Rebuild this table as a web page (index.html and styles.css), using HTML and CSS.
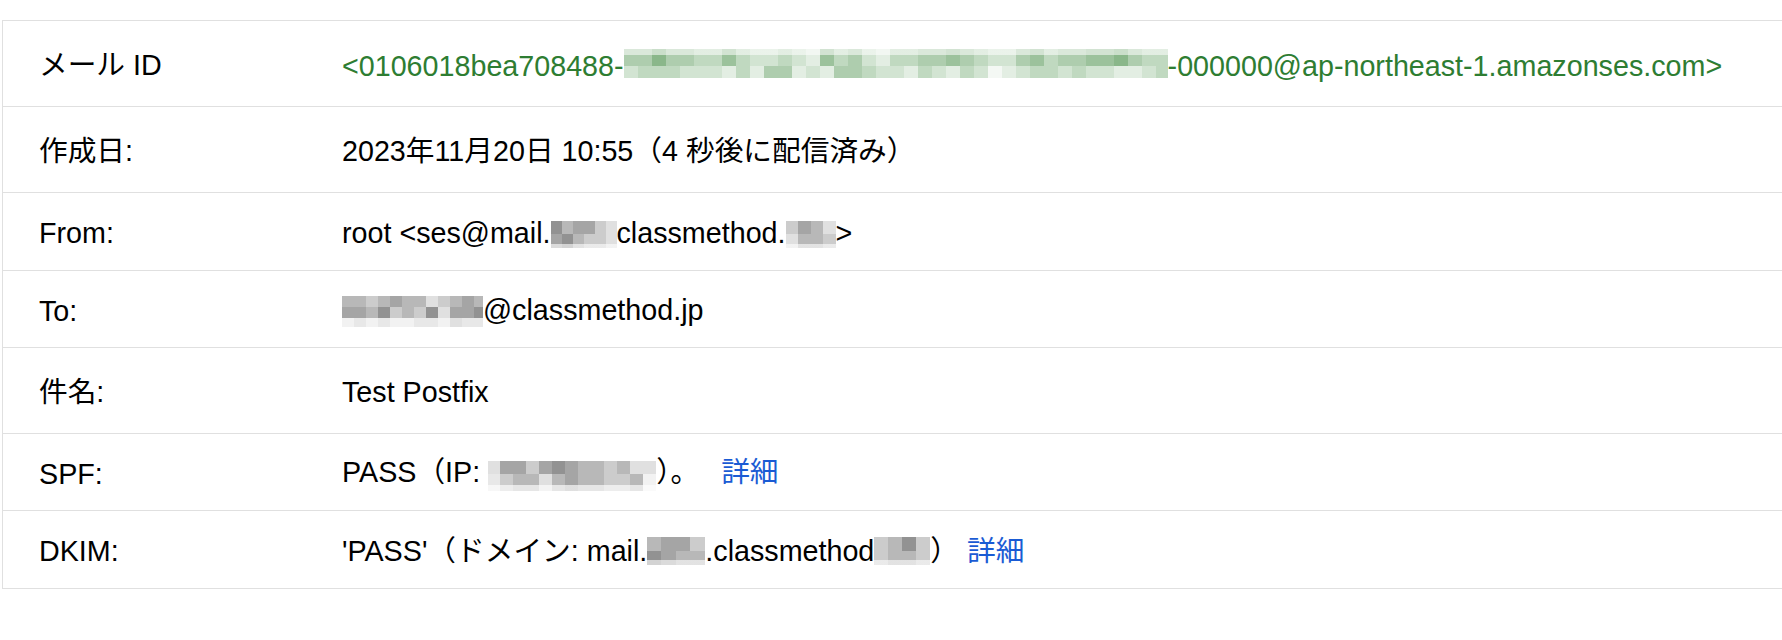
FILE: index.html
```html
<!DOCTYPE html>
<html lang="ja">
<head>
<meta charset="utf-8">
<title>メッセージのソース</title>
<link rel="stylesheet" href="styles.css">
</head>
<body>
<div class="sheet">
  <div class="row tall">
    <div class="key">メール ID</div>
    <div class="val msgid">&lt;0106018bea708488-<span class="mz mz-id"></span>-000000@ap-northeast-1.amazonses.com&gt;</div>
  </div>
  <div class="row tall">
    <div class="key">作成日:</div>
    <div class="val">2023年11月20日 10:55（4 秒後に配信済み）</div>
  </div>
  <div class="row mid">
    <div class="key">From:</div>
    <div class="val">root &lt;ses@mail.<span class="mz mz-from1"></span>classmethod.<span class="mz mz-from2"></span>&gt;</div>
  </div>
  <div class="row short">
    <div class="key">To:</div>
    <div class="val"><span class="mz mz-to"></span>@classmethod.jp</div>
  </div>
  <div class="row tall">
    <div class="key">件名:</div>
    <div class="val">Test Postfix</div>
  </div>
  <div class="row short">
    <div class="key">SPF:</div>
    <div class="val">PASS（IP: <span class="mz mz-spf"></span>）。<a class="link link-spf" href="#">詳細</a></div>
  </div>
  <div class="row mid">
    <div class="key">DKIM:</div>
    <div class="val">'PASS'（ドメイン: mail.<span class="mz mz-dk1"></span>.classmethod<span class="mz mz-dk2"></span>） <a class="link" href="#">詳細</a></div>
  </div>
</div>
</body>
</html>
```

FILE: styles.css
```css
html, body {
  margin: 0;
  padding: 0;
  background: #ffffff;
  overflow: hidden;
}

body {
  font-family: "Liberation Sans", Arial, "Noto Sans CJK JP", sans-serif;
  font-size: 28.7px;
  color: #000;
}

.sheet {
  margin: 20px 0 0 2px;
  width: 1800px;
  border-top: 1px solid #e0e0e0;
  border-left: 1px solid #e0e0e0;
}

.row {
  box-sizing: border-box;
  display: grid;
  grid-template-columns: 339px 1fr;
  align-items: center;
  padding-top: 3px;
  border-bottom: 1px solid #e0e0e0;
  line-height: 32px;
  white-space: nowrap;
}

.row.tall { height: 86px; }
.row.mid { height: 78px; }
.row.short { height: 77px; }

.key {
  padding-left: 36px;
}

.msgid {
  color: #2e7d32;
}

.link {
  color: #1a5bd4;
  text-decoration: none;
}

.link-spf {
  margin-left: 22px;
}

/* pixelated (mosaic) redactions */
.mz {
  display: inline-block;
  background-repeat: no-repeat;
}

.mz-id {
  width: 544px;
  height: 29px;
  vertical-align: -2px;
  background-image:
    linear-gradient(rgba(255,255,255,0.55), rgba(255,255,255,0.55)),
    linear-gradient(90deg, #aecdae 0 28px, #8ab78a 28px 42px, #aecdae 42px 70px, #c0d9c0 70px 98px, #9cc29c 98px 112px, #c0d9c0 112px 126px, #d2e4d2 126px 154px, #c0d9c0 154px 168px, #d2e4d2 168px 182px, #e3eee3 182px 196px, #9cc29c 196px 210px, #c0d9c0 210px 224px, #aecdae 224px 238px, #d2e4d2 238px 252px, #e3eee3 252px 266px, #c0d9c0 266px 294px, #aecdae 294px 322px, #9cc29c 322px 336px, #aecdae 336px 350px, #c0d9c0 350px 364px, #d2e4d2 364px 392px, #aecdae 392px 406px, #9cc29c 406px 420px, #c0d9c0 420px 434px, #aecdae 434px 462px, #9cc29c 462px 490px, #8ab78a 490px 504px, #aecdae 504px 518px, #c0d9c0 518px 546px, #d2e4d2 546px 560px),
    linear-gradient(90deg, #d2e4d2 0 14px, #c0d9c0 14px 56px, #d2e4d2 56px 98px, #e3eee3 98px 112px, #c0d9c0 112px 126px, #e3eee3 126px 140px, #aecdae 140px 168px, #e3eee3 168px 182px, #d2e4d2 182px 196px, #e3eee3 196px 210px, #aecdae 210px 238px, #c0d9c0 238px 252px, #d2e4d2 252px 280px, #e3eee3 280px 294px, #c0d9c0 294px 308px, #d2e4d2 308px 322px, #e3eee3 322px 336px, #c0d9c0 336px 350px, #d2e4d2 350px 364px, #f4f8f4 364px 378px, #e3eee3 378px 392px, #d2e4d2 392px 406px, #c0d9c0 406px 434px, #d2e4d2 434px 448px, #c0d9c0 448px 462px, #d2e4d2 462px 490px, #e3eee3 490px 518px, #d2e4d2 518px 532px, #c0d9c0 532px 560px);
  background-size: 100% 6px, 100% 17px, 100% 12px;
  background-position: left top, left top, left bottom;
}

.mz-from1 {
  width: 66px;
  height: 27px;
  vertical-align: -5px;
  background-image:
    linear-gradient(rgba(255,255,255,0.6), rgba(255,255,255,0.6)),
    linear-gradient(90deg, #929292 0 11px, #b8b8b8 11px 22px, #a5a5a5 22px 44px, #cccccc 44px 55px, #e0e0e0 55px 66px),
    linear-gradient(90deg, #a5a5a5 0 11px, #929292 11px 22px, #b8b8b8 22px 33px, #cccccc 33px 55px, #e0e0e0 55px 66px);
  background-size: 100% 4px, 100% 13px, 100% 14px;
  background-position: left bottom, left top, left bottom;
}

.mz-from2 {
  width: 50px;
  height: 27px;
  vertical-align: -5px;
  background-image:
    linear-gradient(rgba(255,255,255,0.6), rgba(255,255,255,0.6)),
    linear-gradient(90deg, #cccccc 0 12px, #a5a5a5 12px 25px, #b8b8b8 25px 37px, #e0e0e0 37px 50px),
    linear-gradient(90deg, #e0e0e0 0 12px, #b8b8b8 12px 37px, #cccccc 37px 50px);
  background-size: 100% 4px, 100% 13px, 100% 14px;
  background-position: left bottom, left top, left bottom;
}

.mz-to {
  width: 141px;
  height: 31px;
  vertical-align: -7px;
  background-image:
    linear-gradient(90deg, #b8b8b8 0 24px, #cccccc 24px 36px, #b8b8b8 36px 48px, #a5a5a5 48px 60px, #b8b8b8 60px 84px, #e0e0e0 84px 96px, #cccccc 96px 108px, #b8b8b8 108px 120px, #a5a5a5 120px 132px, #b8b8b8 132px 144px),
    linear-gradient(90deg, #a5a5a5 0 24px, #b8b8b8 24px 36px, #929292 36px 48px, #cccccc 48px 60px, #b8b8b8 60px 72px, #cccccc 72px 84px, #929292 84px 96px, #e0e0e0 96px 108px, #a5a5a5 108px 132px, #929292 132px 144px),
    linear-gradient(90deg, #f2f2f2 0 12px, #e8e8e8 12px 24px, #f2f2f2 24px 36px, #e8e8e8 36px 48px, #f2f2f2 48px 72px, #e8e8e8 72px 96px, #f2f2f2 96px 108px, #e0e0e0 108px 120px, #e8e8e8 120px 144px);
  background-size: 100% 11px, 100% 11px, 100% 9px;
  background-position: left top, left 11px, left bottom;
}

.mz-spf {
  width: 168px;
  height: 30px;
  vertical-align: -9px;
  background-image:
    linear-gradient(rgba(255,255,255,0.65), rgba(255,255,255,0.65)),
    linear-gradient(90deg, #e0e0e0 0 12px, #a5a5a5 12px 38px, #cccccc 38px 51px, #a5a5a5 51px 64px, #929292 64px 77px, #a5a5a5 77px 90px, #b8b8b8 90px 116px, #cccccc 116px 129px, #b8b8b8 129px 142px, #e0e0e0 142px 168px),
    linear-gradient(90deg, #e8e8e8 0 12px, #cccccc 12px 25px, #b8b8b8 25px 51px, #e0e0e0 51px 64px, #b8b8b8 64px 77px, #a5a5a5 77px 90px, #b8b8b8 90px 116px, #cccccc 116px 142px, #b8b8b8 142px 155px, #f2f2f2 155px 168px);
  background-size: 100% 6px, 100% 13px, 100% 17px;
  background-position: left bottom, left top, left bottom;
}

.mz-dk1 {
  width: 58px;
  height: 28px;
  vertical-align: -4px;
  background-image:
    linear-gradient(rgba(255,255,255,0.6), rgba(255,255,255,0.6)),
    linear-gradient(90deg, #b8b8b8 0 14px, #a5a5a5 14px 43px, #cccccc 43px 58px),
    linear-gradient(90deg, #929292 0 14px, #a5a5a5 14px 29px, #b8b8b8 29px 58px);
  background-size: 100% 5px, 100% 14px, 100% 14px;
  background-position: left bottom, left top, left bottom;
}

.mz-dk2 {
  width: 56px;
  height: 28px;
  vertical-align: -4px;
  background-image:
    linear-gradient(rgba(255,255,255,0.6), rgba(255,255,255,0.6)),
    linear-gradient(90deg, #cccccc 0 14px, #b8b8b8 14px 28px, #929292 28px 42px, #cccccc 42px 56px),
    linear-gradient(90deg, #cccccc 0 14px, #b8b8b8 14px 42px, #cccccc 42px 56px);
  background-size: 100% 5px, 100% 14px, 100% 14px;
  background-position: left bottom, left top, left bottom;
}
```
